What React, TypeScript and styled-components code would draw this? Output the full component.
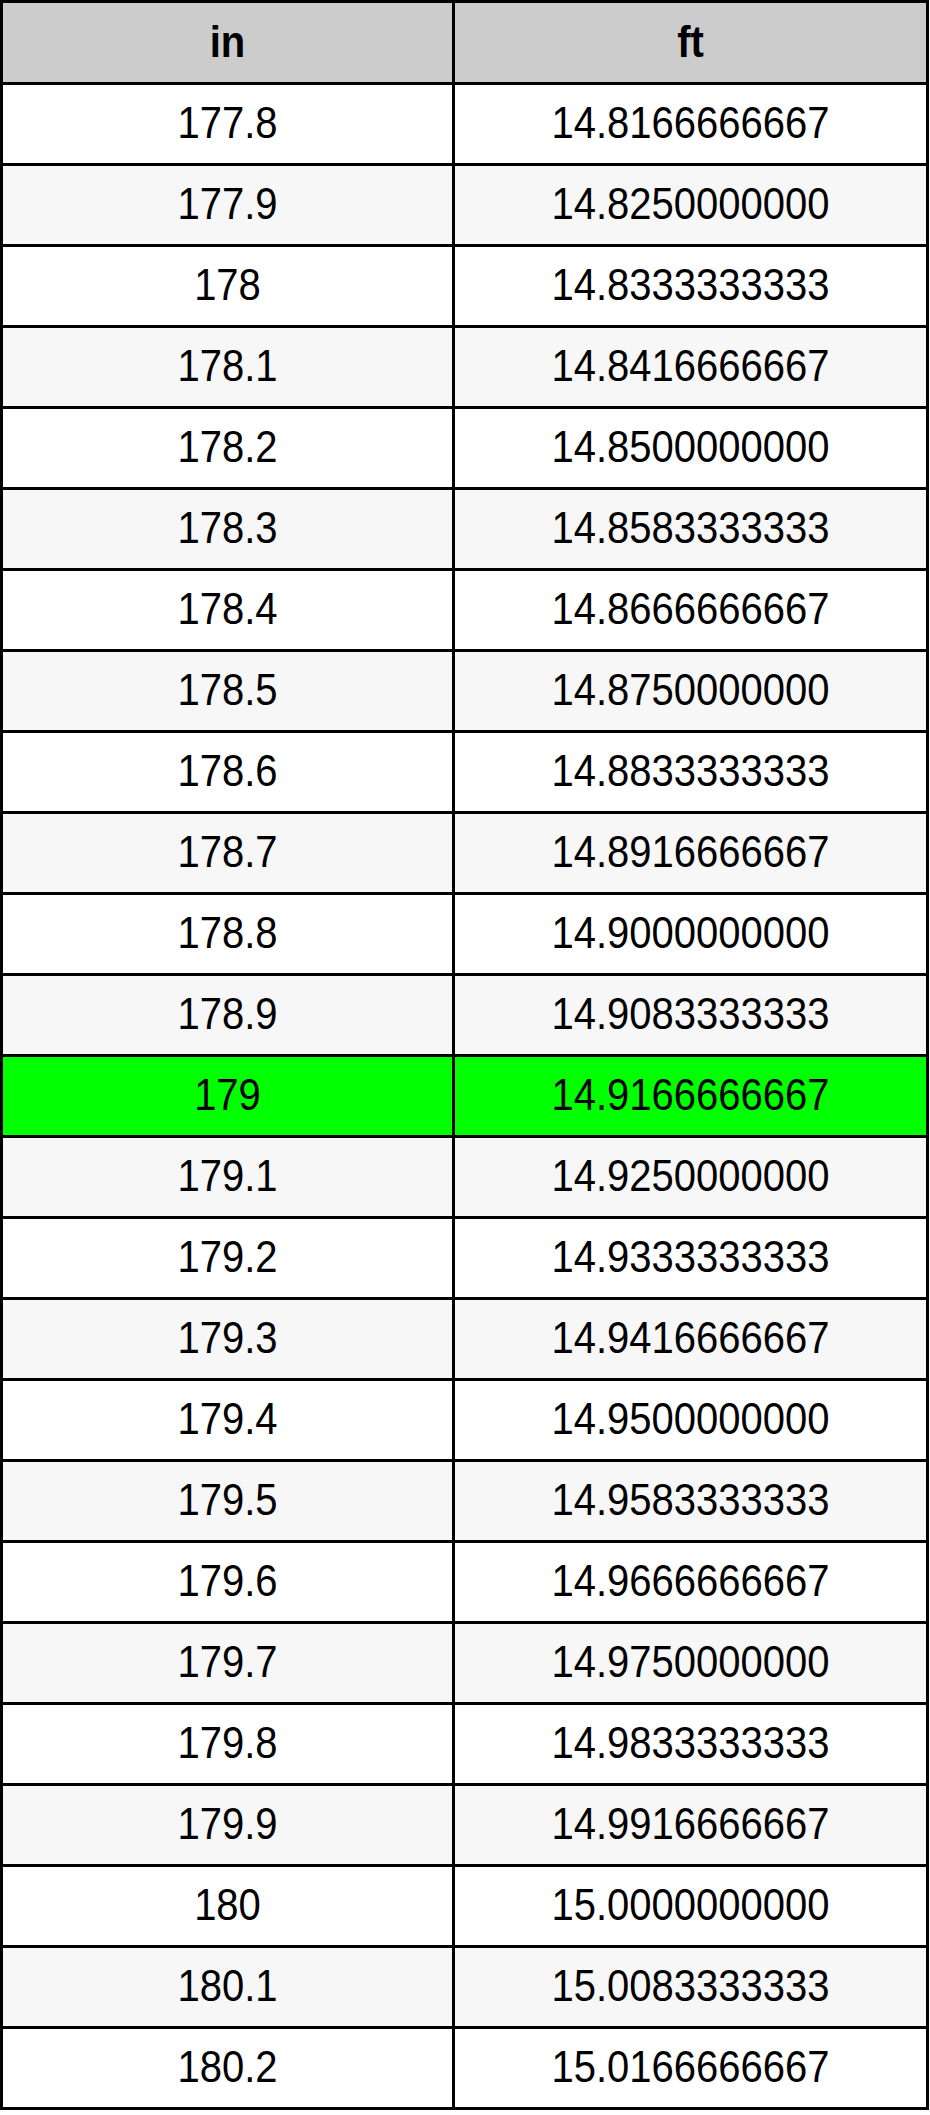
import styled, { createGlobalStyle } from 'styled-components';

const rows: [string, string][] = [
  ['177.8', '14.8166666667'],
  ['177.9', '14.8250000000'],
  ['178', '14.8333333333'],
  ['178.1', '14.8416666667'],
  ['178.2', '14.8500000000'],
  ['178.3', '14.8583333333'],
  ['178.4', '14.8666666667'],
  ['178.5', '14.8750000000'],
  ['178.6', '14.8833333333'],
  ['178.7', '14.8916666667'],
  ['178.8', '14.9000000000'],
  ['178.9', '14.9083333333'],
  ['179', '14.9166666667'],
  ['179.1', '14.9250000000'],
  ['179.2', '14.9333333333'],
  ['179.3', '14.9416666667'],
  ['179.4', '14.9500000000'],
  ['179.5', '14.9583333333'],
  ['179.6', '14.9666666667'],
  ['179.7', '14.9750000000'],
  ['179.8', '14.9833333333'],
  ['179.9', '14.9916666667'],
  ['180', '15.0000000000'],
  ['180.1', '15.0083333333'],
  ['180.2', '15.0166666667'],
];

const HIGHLIGHT = '179';

export default function App() {
  return (
    <>
      <GlobalStyle />
      <Table>
        <thead>
          <tr>
            <HeadCell $width={449}>
              <Value>in</Value>
            </HeadCell>
            <HeadCell $width={471}>
              <Value>ft</Value>
            </HeadCell>
          </tr>
        </thead>
        <tbody>
          {rows.map(([inches, feet], i) => {
            const tone = inches === HIGHLIGHT ? 'highlight' : i % 2 === 1 ? 'shaded' : 'plain';
            return (
              <tr key={inches}>
                <Cell $tone={tone}>
                  <Value>{inches}</Value>
                </Cell>
                <Cell $tone={tone}>
                  <Value>{feet}</Value>
                </Cell>
              </tr>
            );
          })}
        </tbody>
      </Table>
    </>
  );
}

const GlobalStyle = createGlobalStyle`
  body {
    margin: 0;
    background: #fff;
    font-family: "Liberation Sans", Arial, sans-serif;
  }
`;

const Table = styled.table`
  width: 929px;
  border-collapse: separate;
  border-spacing: 0;
  border-top: 3px solid #000;
  border-left: 3px solid #000;
  table-layout: fixed;
`;

const HeadCell = styled.th<{ $width: number }>`
  width: ${({ $width }) => $width}px;
  height: 79px;
  padding: 0;
  background: #cccccc;
  border-right: 3px solid #000;
  border-bottom: 3px solid #000;
  font-size: 40px;
  font-weight: bold;
  color: #000;
  text-align: center;
  vertical-align: middle;
  line-height: 1;
`;

const toneColors = {
  plain: '#ffffff',
  shaded: '#f7f7f7',
  highlight: '#00ff00',
};

const Cell = styled.td<{ $tone: keyof typeof toneColors }>`
  height: 78px;
  padding: 0;
  background: ${({ $tone }) => toneColors[$tone]};
  border-right: 3px solid #000;
  border-bottom: 3px solid #000;
  font-size: 40px;
  color: #000;
  text-align: center;
  vertical-align: middle;
  line-height: 1;
`;

// the source font renders a touch taller than Arial at the same width
const Value = styled.span`
  display: inline-block;
  transform: translateY(-2px) scaleY(1.12);
`;
